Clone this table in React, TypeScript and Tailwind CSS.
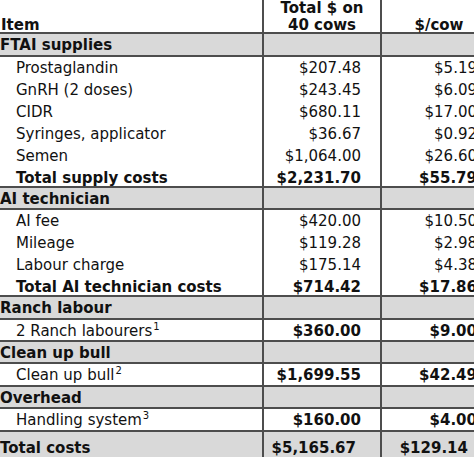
import React from 'react';

type Kind = 'section' | 'item' | 'subtotal' | 'single' | 'grand';

interface Fila {
  label: string;
  sup?: string;
  total?: string;
  cow?: string;
  kind: Kind;
  h: string;
  border?: boolean;
}

const filas: Fila[] = [
  { label: 'FTAI supplies', kind: 'section', h: 'h-[23px]', border: true },
  { label: 'Prostaglandin', total: '$207.48', cow: '$5.19', kind: 'item', h: 'h-[22px]' },
  { label: 'GnRH (2 doses)', total: '$243.45', cow: '$6.09', kind: 'item', h: 'h-[22px]' },
  { label: 'CIDR', total: '$680.11', cow: '$17.00', kind: 'item', h: 'h-[22px]' },
  { label: 'Syringes, applicator', total: '$36.67', cow: '$0.92', kind: 'item', h: 'h-[22px]' },
  { label: 'Semen', total: '$1,064.00', cow: '$26.60', kind: 'item', h: 'h-[22px]' },
  { label: 'Total supply costs', total: '$2,231.70', cow: '$55.79', kind: 'subtotal', h: 'h-[21px]', border: true },
  { label: 'AI technician', kind: 'section', h: 'h-[22px]', border: true },
  { label: 'AI fee', total: '$420.00', cow: '$10.50', kind: 'item', h: 'h-[22px]' },
  { label: 'Mileage', total: '$119.28', cow: '$2.98', kind: 'item', h: 'h-[22px]' },
  { label: 'Labour charge', total: '$175.14', cow: '$4.38', kind: 'item', h: 'h-[22px]' },
  { label: 'Total AI technician costs', total: '$714.42', cow: '$17.86', kind: 'subtotal', h: 'h-[21px]', border: true },
  { label: 'Ranch labour', kind: 'section', h: 'h-[23px]', border: true },
  { label: '2 Ranch labourers', sup: '1', total: '$360.00', cow: '$9.00', kind: 'single', h: 'h-[22px]', border: true },
  { label: 'Clean up bull', kind: 'section', h: 'h-[22px]', border: true },
  { label: 'Clean up bull', sup: '2', total: '$1,699.55', cow: '$42.49', kind: 'single', h: 'h-[23px]', border: true },
  { label: 'Overhead', kind: 'section', h: 'h-[22px]', border: true },
  { label: 'Handling system', sup: '3', total: '$160.00', cow: '$4.00', kind: 'single', h: 'h-[23px]', border: true },
  { label: 'Total costs', total: '$5,165.67', cow: '$129.14', kind: 'grand', h: 'h-[32px]' },
];

const FilaTabla: React.FC<{ fila: Fila }> = ({ fila }) => {
  const gris = fila.kind === 'section' || fila.kind === 'grand';
  const etiquetaNegrita = fila.kind !== 'item' && fila.kind !== 'single';
  const valorNegrita = fila.kind !== 'item';
  const fondo = gris ? 'bg-[#d9d9d9]' : 'bg-white';
  const borde = fila.border ? 'border-b-2 border-b-[#4d4d4d]' : '';
  const indent = fila.kind === 'section' || fila.kind === 'grand' ? 'pl-0' : 'pl-4';
  const prTotal = fila.kind === 'grand' ? 'pr-[24px]' : 'pr-[19px]';
  const prCow = fila.kind === 'grand' ? 'pr-[28px]' : 'pr-[19px]';

  return (
    <div className={`grid grid-cols-[264px_118px_114px] ${fila.h} ${fondo} ${borde}`}>
      <div className={`flex items-center border-r-2 border-r-[#4d4d4d] ${indent} ${etiquetaNegrita ? 'font-bold' : ''}`}>
        <span>
          {fila.label}
          {fila.sup && <sup className="text-[10px] relative -top-[6px] ml-[1px]">{fila.sup}</sup>}
        </span>
      </div>
      <div className={`flex items-center justify-end border-r-2 border-r-[#4d4d4d] ${prTotal} ${valorNegrita ? 'font-bold' : ''}`}>
        {fila.total}
      </div>
      <div className={`flex items-center justify-end ${prCow} ${valorNegrita ? 'font-bold' : ''}`}>
        {fila.cow}
      </div>
    </div>
  );
};

export default function App() {
  return (
    <div
      className="w-[474px] h-[457px] overflow-hidden bg-white text-[15px] text-[#111]"
      style={{ fontFamily: '"DejaVu Sans", Verdana, sans-serif' }}
    >
      <div className="w-[496px]">
        {/* === Encabezado === */}
        <div className="grid grid-cols-[264px_118px_114px] h-[34px] border-b-2 border-b-[#4d4d4d] font-bold leading-[17px]">
          <div className="flex items-end border-r-2 border-r-[#4d4d4d] pl-[1px]">Item</div>
          <div className="flex flex-col justify-end items-center text-center border-r-2 border-r-[#4d4d4d]">
            <span>Total $ on</span>
            <span>40 cows</span>
          </div>
          <div className="flex items-end justify-center">$/cow</div>
        </div>

        {filas.map((fila, i) => (
          <FilaTabla key={i} fila={fila} />
        ))}
      </div>
    </div>
  );
}
